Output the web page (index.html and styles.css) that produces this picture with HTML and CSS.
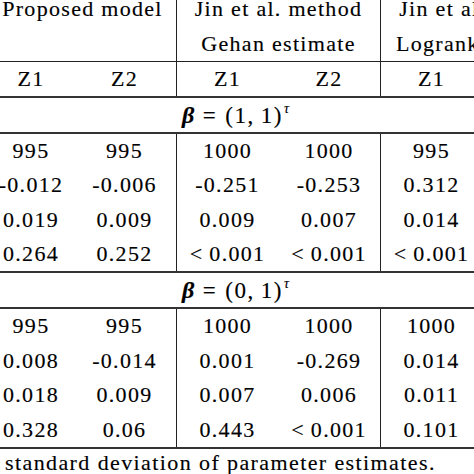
FILE: index.html
```html
<!DOCTYPE html>
<html>
<head>
<meta charset="utf-8">
<link rel="stylesheet" href="styles.css">
</head>
<body>
<div class="page">
  <div class="tbl">
    <div class="row">
      <div class="cell g1 sep">Proposed model</div>
      <div class="cell g2 sep">Jin et al. method</div>
      <div class="cell g3">Jin et al. method</div>
    </div>
    <div class="row thin">
      <div class="cell g1 sep"></div>
      <div class="cell g2 sep">Gehan estimate</div>
      <div class="cell g3">Logrank estimate</div>
    </div>
    <div class="row thick">
      <div class="cell c1">Z1</div><div class="cell c2 sep">Z2</div>
      <div class="cell c3">Z1</div><div class="cell c4 sep">Z2</div>
      <div class="cell c5">Z1</div><div class="cell c6">Z2</div>
    </div>
    <div class="row thick beta-row">
      <div class="cell all"><span class="beta">β</span><span class="eq">=</span>(1,&thinsp;1)<sup class="tau">τ</sup></div>
    </div>
    <div class="row">
      <div class="cell c1">995</div><div class="cell c2 sep">995</div>
      <div class="cell c3">1000</div><div class="cell c4 sep">1000</div>
      <div class="cell c5">995</div><div class="cell c6">995</div>
    </div>
    <div class="row">
      <div class="cell c1">-0.012</div><div class="cell c2 sep">-0.006</div>
      <div class="cell c3">-0.251</div><div class="cell c4 sep">-0.253</div>
      <div class="cell c5">0.312</div><div class="cell c6">0.310</div>
    </div>
    <div class="row">
      <div class="cell c1">0.019</div><div class="cell c2 sep">0.009</div>
      <div class="cell c3">0.009</div><div class="cell c4 sep">0.007</div>
      <div class="cell c5">0.014</div><div class="cell c6">0.012</div>
    </div>
    <div class="row thick">
      <div class="cell c1">0.264</div><div class="cell c2 sep">0.252</div>
      <div class="cell c3"><span class="lt">&lt;</span>0.001</div><div class="cell c4 sep"><span class="lt">&lt;</span>0.001</div>
      <div class="cell c5"><span class="lt">&lt;</span>0.001</div><div class="cell c6"><span class="lt">&lt;</span>0.001</div>
    </div>
    <div class="row thick beta-row">
      <div class="cell all"><span class="beta">β</span><span class="eq">=</span>(0,&thinsp;1)<sup class="tau">τ</sup></div>
    </div>
    <div class="row">
      <div class="cell c1">995</div><div class="cell c2 sep">995</div>
      <div class="cell c3">1000</div><div class="cell c4 sep">1000</div>
      <div class="cell c5">1000</div><div class="cell c6">1000</div>
    </div>
    <div class="row">
      <div class="cell c1">0.008</div><div class="cell c2 sep">-0.014</div>
      <div class="cell c3">0.001</div><div class="cell c4 sep">-0.269</div>
      <div class="cell c5">0.014</div><div class="cell c6">-0.270</div>
    </div>
    <div class="row">
      <div class="cell c1">0.018</div><div class="cell c2 sep">0.009</div>
      <div class="cell c3">0.007</div><div class="cell c4 sep">0.006</div>
      <div class="cell c5">0.011</div><div class="cell c6">0.006</div>
    </div>
    <div class="row thick">
      <div class="cell c1">0.328</div><div class="cell c2 sep">0.06</div>
      <div class="cell c3">0.443</div><div class="cell c4 sep"><span class="lt">&lt;</span>0.001</div>
      <div class="cell c5">0.101</div><div class="cell c6"><span class="lt">&lt;</span>0.001</div>
    </div>
  </div>
  <p class="caption">standard deviation of parameter estimates.</p>
</div>
</body>
</html>
```

FILE: styles.css
```css
html, body {
  margin: 0;
  padding: 0;
  background: #fff;
}
body {
  width: 474px;
  height: 474px;
  overflow: hidden;
  font-family: "Liberation Serif", "Times New Roman", serif;
  font-size: 22px;
  color: #000;
  -webkit-text-stroke: 0.15px #000;
}
.page {
  width: 474px;
  height: 474px;
  overflow: hidden;
}
.tbl {
  margin-top: -8px;
  margin-left: -11px;
  width: 700px;
}
.row {
  display: flex;
  height: 34.5px;
  line-height: 34.5px;
  box-sizing: border-box;
  letter-spacing: 1.3px;
}
.row.thin {
  border-bottom: 1px solid #222;
  height: 35px;
}
.row.thick {
  border-bottom: 2px solid #333;
  height: 36px;
}
.cell {
  box-sizing: border-box;
  text-align: center;
  white-space: nowrap;
  height: 100%;
}
.sep {
  border-right: 1.5px solid #222;
}
.c1 { width: 84px; }
.c2 { width: 104px; }
.c3 { width: 101px; }
.c4 { width: 103px; }
.c5 { width: 101px; }
.c6 { width: 103px; }
.g1 { width: 188px; }
.g2 { width: 204px; }
.g3 { width: 204px; }
.all {
  width: 596px;
  text-align: left;
  padding-left: 193px;
  letter-spacing: 1.5px;
  font-size: 23px;
}
.beta {
  font-weight: bold;
  font-style: italic;
  font-size: 24px;
}
.eq {
  margin: 0 8px 0 7px;
}
.tau {
  font-style: italic;
  font-size: 14px;
  vertical-align: 10px;
  line-height: 0;
  margin-left: 1px;
}
.lt {
  margin-right: 6px;
}
.caption {
  margin: 0;
  padding-left: 5px;
  line-height: 28px;
  letter-spacing: 1.4px;
}
```
